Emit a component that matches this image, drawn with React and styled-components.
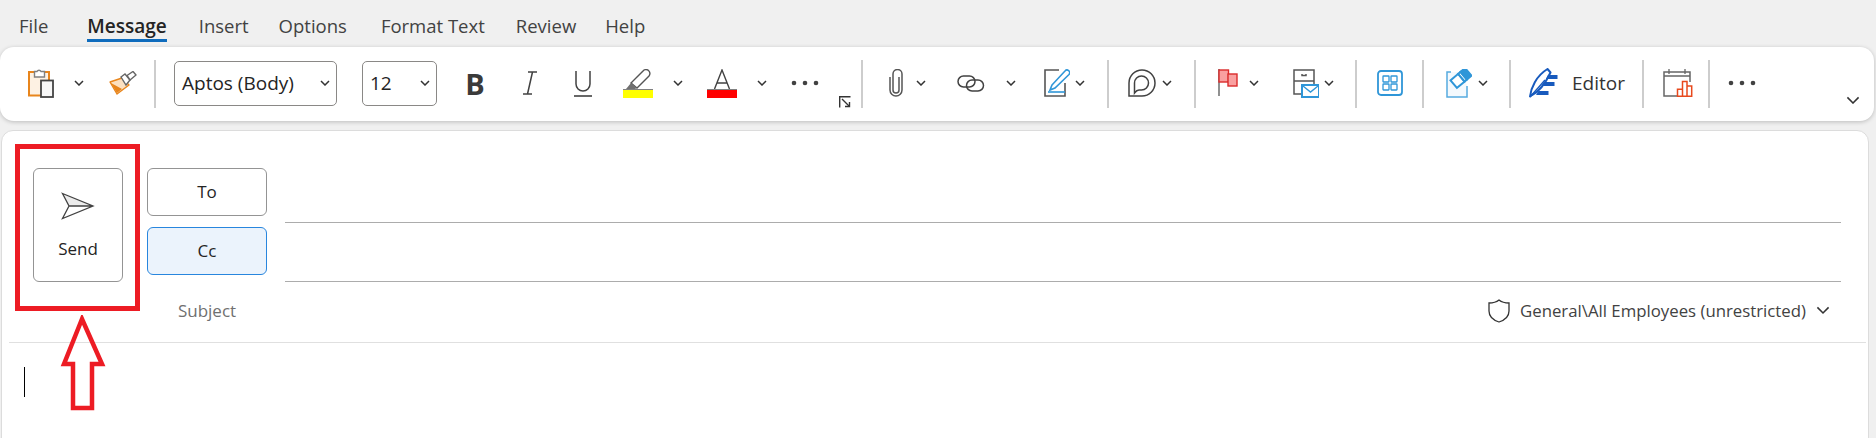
import React from 'react';
import styled, { createGlobalStyle } from 'styled-components';

const GlobalStyle = createGlobalStyle`
  html, body {
    margin: 0;
    padding: 0;
    background: #f0f0f0;
    font-family: "Open Sans", "Noto Sans", "Liberation Sans", sans-serif;
    color: #242424;
    overflow: hidden;
  }
`;

// page shell
const Page = styled.div`
  position: relative;
  width: 1876px;
  height: 438px;
  overflow: hidden;
  background: #f0f0f0;
`;

const TabBar = styled.nav`
  display: flex;
  height: 47px;
  padding-left: 19px;
  box-sizing: border-box;
`;

const Tab = styled.div`
  height: 42px;
  margin-left: ${(p) => p.$ml}px;
  padding-top: 14px;
  box-sizing: border-box;
  font-size: ${(p) => (p.$active ? 19 : 18.5)}px;
  line-height: 24px;
  font-weight: ${(p) => (p.$active ? 600 : 400)};
  color: ${(p) => (p.$active ? '#242424' : '#424242')};
  border-bottom: 3px solid ${(p) => (p.$active ? '#0f6cbd' : 'transparent')};
`;

const Ribbon = styled.div`
  display: flex;
  align-items: center;
  width: 1874px;
  height: 74px;
  padding: 0 0 2px 28px;
  box-sizing: border-box;
  background: #fff;
  border-radius: 14px;
  box-shadow: 0 1px 4px rgba(0, 0, 0, 0.22);
`;

const Slot = styled.div`
  flex: none;
  display: flex;
  align-items: center;
  justify-content: center;
  width: ${(p) => p.$w}px;
  margin-left: ${(p) => p.$ml || 0}px;
`;

const Sep = styled.div`
  flex: none;
  width: 2px;
  height: 48px;
  margin-top: 2px;
  margin-left: ${(p) => p.$ml}px;
  background: #cdcdcd;
`;

const Select = styled.div`
  flex: none;
  display: flex;
  align-items: center;
  justify-content: space-between;
  width: ${(p) => p.$w}px;
  height: 45px;
  margin-left: ${(p) => p.$ml}px;
  padding: 0 6px 0 7px;
  box-sizing: border-box;
  border: 1px solid #8a8886;
  border-radius: 5px;
  font-size: 19px;
  color: #242424;
`;

const EditorLabel = styled.span`
  flex: none;
  width: 53px;
  margin-left: 13px;
  font-size: 19px;
  color: #333;
`;

const Launcher = styled(Slot)`
  align-self: flex-end;
  margin-bottom: 11px;
`;

const Collapse = styled(Slot)`
  align-self: flex-end;
  margin-left: auto;
  margin-right: 14px;
  margin-bottom: 15px;
`;

const BoldGlyph = styled.span`
  font-weight: 700;
  font-size: 29px;
  line-height: 1;
  color: #3a3a3a;
`;

// compose card
const Card = styled.section`
  width: 1868px;
  height: 320px;
  margin: 9px 0 0 1px;
  box-sizing: border-box;
  background: #fff;
  border: 1px solid #dcdcdc;
  border-radius: 12px 12px 0 0;
`;

const Header = styled.div`
  display: grid;
  grid-template-columns: 96px 120px 1556px;
  column-gap: 18px;
  padding: 37px 0 0 31px;
  height: 114px;
`;

const SendButton = styled.button`
  display: flex;
  flex-direction: column;
  align-items: center;
  width: 90px;
  height: 114px;
  padding: 23px 0 0;
  box-sizing: border-box;
  background: #fff;
  border: 1px solid #949494;
  border-radius: 6px;
  font: inherit;
  font-size: 17px;
  color: #242424;
`;

const SendLabel = styled.span`
  margin-top: 18px;
  line-height: 22px;
`;

const AddressButtons = styled.div`
  display: flex;
  flex-direction: column;
  gap: 11px;
`;

const AddressButton = styled.button`
  width: 120px;
  height: 48px;
  padding: 0 0 2px;
  box-sizing: border-box;
  background: ${(p) => (p.$selected ? '#ebf3fc' : '#fff')};
  border: 1px solid ${(p) => (p.$selected ? '#2886de' : '#949494')};
  border-radius: 6px;
  font: inherit;
  font-size: 17px;
  color: #242424;
`;

const Fields = styled.div`
  display: flex;
  flex-direction: column;
`;

const Field = styled.div`
  height: ${(p) => p.$h}px;
  box-sizing: border-box;
  border-bottom: 1px solid #acacac;
`;

const SubjectRow = styled.div`
  display: flex;
  align-items: center;
  height: 61px;
  margin: 0 2px 0 7px;
  padding: 0 0 3px 138px;
  box-sizing: border-box;
  border-bottom: 1px solid #e0e0e0;
`;

const SubjectLabel = styled.span`
  width: 120px;
  text-align: center;
  font-size: 17px;
  color: #707070;
`;

const Sensitivity = styled.div`
  display: flex;
  align-items: center;
  margin-left: auto;
  margin-right: 36px;
  font-size: 16.800px;
  color: #424242;
`;

const SensitivityText = styled.span`
  margin: 0 10px;
`;

const Body = styled.div`
  padding: 24px 0 0 22px;
`;

const Caret = styled.div`
  width: 1px;
  height: 30px;
  background: #000;
`;

// red annotations drawn on top of the screenshot
const RedBox = styled.div`
  position: absolute;
  left: 15px;
  top: 144px;
  width: 125px;
  height: 167px;
  box-sizing: border-box;
  border: 5px solid #ed1c24;
`;

const ArrowMark = styled.svg`
  position: absolute;
  left: 60px;
  top: 315px;
`;

const Chevron = ({ size = 10 }) => (
  <svg width={size} height={size * 0.6} viewBox="0 0 10 6" fill="none">
    <path d="M1 1l4 4 4-4" stroke="#333" strokeWidth={size > 10 ? 1.1 : 1.5} />
  </svg>
);

const PasteIcon = () => (
  <svg width="26" height="30" viewBox="0 0 26 30" fill="none">
    <path d="M1 4h20v24H1z" fill="#fdf1e3" />
    <path d="M7 4H1v23.500h12M15 4h6v8" stroke="#e8851c" strokeWidth="2" />
    <path d="M6.500 9V3.500h2.500a2.200 2.200 0 0 1 4 0h3.500V9z" fill="#fff" stroke="#808080" strokeWidth="1.400" />
    <rect x="13" y="12.500" width="12" height="16.500" fill="#f7f7f7" stroke="#444" strokeWidth="1.800" />
  </svg>
);

const BrushIcon = () => (
  <svg width="28" height="24" viewBox="0 0 28 24" fill="none">
    <path d="M1 11l12-4 7 7-12 9z" fill="#fce0c0" stroke="#e8851c" strokeWidth="1.400" strokeLinejoin="round" />
    <path d="M2 12l11 6-5 4z" fill="#e8851c" />
    <path d="M12 6l4-3 5 6-4 5z" fill="#fff" stroke="#666" strokeWidth="1.400" />
    <path d="M18 4.500l6-4 3 3.500-6 5z" fill="#fff" stroke="#666" strokeWidth="1.400" strokeLinejoin="round" />
  </svg>
);

const ItalicIcon = () => (
  <svg width="16" height="24" viewBox="0 0 16 24" fill="none" stroke="#424242" strokeWidth="1.500">
    <path d="M6 1h9M1 23h9M10.500 1L5.500 23" />
  </svg>
);

const UnderlineIcon = () => (
  <svg width="20" height="27" viewBox="0 0 20 27" fill="none" stroke="#424242">
    <path d="M3 1v13a7 7 0 0 0 14 0V1" strokeWidth="1.500" />
    <path d="M1 26h18" strokeWidth="1.600" />
  </svg>
);

const HighlightIcon = () => (
  <svg width="30" height="29" viewBox="0 0 30 29" fill="none">
    <path d="M8 14L20 2a2.500 2.500 0 0 1 6 5L14 19z" fill="#fff" stroke="#555" strokeWidth="1.400" />
    <path d="M3 20l5-6 6 5-2 1z" fill="#707070" />
    <path d="M0 20.500h30" stroke="#808080" />
    <rect y="21" width="30" height="8" fill="#ffff00" />
  </svg>
);

const FontColorIcon = () => (
  <svg width="30" height="29" viewBox="0 0 30 29" fill="none">
    <path d="M7.500 20L15 1l7.500 19M10 14h10" stroke="#424242" strokeWidth="1.400" />
    <path d="M0 20.500h30" stroke="#808080" />
    <rect y="21" width="30" height="8" fill="#ff0000" />
  </svg>
);

const Dots = () => (
  <svg width="28" height="6" viewBox="0 0 28 6" fill="#424242">
    <circle cx="3" cy="3" r="2.300" />
    <circle cx="14" cy="3" r="2.300" />
    <circle cx="25" cy="3" r="2.300" />
  </svg>
);

const LauncherIcon = () => (
  <svg width="12" height="12" viewBox="0 0 12 12" fill="none" stroke="#333" strokeWidth="1.400">
    <path d="M.700 11.500V.700H11.500M3 3l7.500 7.500" />
    <path d="M10.500 6v4.500H6" />
  </svg>
);

const ClipIcon = () => (
  <svg width="14" height="28" viewBox="0 0 14 28" fill="none" stroke="#555" strokeWidth="1.500">
    <path d="M10 8v13a3 3 0 0 1-6 0V5a3.500 3.500 0 0 1 9 0v16a6 6 0 0 1-12 0V8" />
  </svg>
);

const LinkIcon = () => (
  <svg width="28" height="17" viewBox="0 0 28 17" fill="none" stroke="#424242" strokeWidth="1.500">
    <rect x="1" y="1" width="17" height="11" rx="5.500" />
    <rect x="9.500" y="5" width="17" height="11" rx="5.500" />
  </svg>
);

const SignatureIcon = () => (
  <svg width="26" height="28" viewBox="0 0 26 28" fill="none">
    <path d="M15 1H1v26h20V14" stroke="#555" strokeWidth="1.600" />
    <path d="M8 16L21 2a2 2 0 0 1 4 3.500L11 19 6 21z" fill="#fff" stroke="#2f96d8" strokeWidth="1.600" />
    <path d="M4 23h17" stroke="#2f96d8" strokeWidth="1.600" />
  </svg>
);

const LoopIcon = () => (
  <svg width="28" height="28" viewBox="0 0 28 28" fill="none" stroke="#424242" strokeWidth="1.500">
    <path d="M1 27V14a13 13 0 1 1 13 13z" />
    <path d="M6.500 14a7 7 0 1 1 7 7h-2.500c-2 0-3 1-4.500 3z" />
  </svg>
);

const FlagIcon = () => (
  <svg width="20" height="28" viewBox="0 0 20 28" fill="none">
    <path d="M1 0v27" stroke="#555" strokeWidth="1.300" />
    <rect x="1" y="1" width="9.500" height="12" fill="#f9a0a0" stroke="#db2b2b" strokeWidth="1.400" />
    <rect x="10" y="5" width="9" height="12" fill="#f9a0a0" stroke="#db2b2b" strokeWidth="1.400" />
  </svg>
);

const MailFileIcon = () => (
  <svg width="26" height="29" viewBox="0 0 26 29" fill="none">
    <path d="M8 25H1V1h20v14M1 12h20M9 5v1.500h4V5" stroke="#555" strokeWidth="1.500" />
    <rect x="9" y="16" width="17" height="12" fill="#fff" stroke="#2f96d8" strokeWidth="2" />
    <path d="M10 17l7.500 6 7.500-6" stroke="#2f96d8" strokeWidth="1.400" />
  </svg>
);

const AppsIcon = () => (
  <svg width="26" height="26" viewBox="0 0 26 26" fill="none" stroke="#2f96d8">
    <rect x="1" y="1" width="24" height="24" rx="3" strokeWidth="1.800" />
    <rect x="6" y="6" width="6" height="6" rx="0.500" strokeWidth="1.300" />
    <rect x="14" y="6" width="6" height="6" rx="0.500" strokeWidth="1.300" />
    <rect x="6" y="14" width="6" height="6" rx="0.500" strokeWidth="1.300" />
    <rect x="14" y="14" width="6" height="6" rx="0.500" strokeWidth="1.300" />
  </svg>
);

const SensitivityIcon = () => (
  <svg width="26" height="29" viewBox="0 0 26 29" fill="none" stroke="#2f96d8">
    <path d="M1 3h12l8 13v12H1z" fill="#f4f9fd" stroke="none" />
    <path d="M5 3H1v25h20V17" strokeWidth="1.500" stroke="#55abe0" />
    <g transform="rotate(-40 15 9)" strokeWidth="2">
      <rect x="5.500" y="4" width="10" height="10" fill="#fff" />
      <rect x="15.500" y="4" width="3" height="10" fill="#fff" />
      <rect x="18.500" y="4" width="6" height="10" fill="#2f96d8" />
    </g>
  </svg>
);

const PenIcon = () => (
  <svg width="30" height="30" viewBox="0 0 30 30" fill="none">
    <path d="M1 28.500C2 20 7 8 18.500 1l3 3.500C18 12 11 23 3 27z" fill="#fff" stroke="#185abd" strokeWidth="2" strokeLinejoin="round" />
    <path d="M1 29L16 12" stroke="#185abd" strokeWidth="1.400" />
    <path d="M19 7h9.500v4H17zM15 14h10.500v4H12.500zM9.500 23H19.500v4H7z" fill="#185abd" />
  </svg>
);

const CalendarIcon = () => (
  <svg width="30" height="28" viewBox="0 0 30 28" fill="none">
    <path d="M14 27H1V3h26v10" stroke="#666" strokeWidth="1.500" />
    <path d="M1 7h26M6 0v5M22 0v5" stroke="#666" strokeWidth="1.300" />
    <path d="M14.500 27.200v-7h5v7zM19.500 27.200V12.500h4.500v14.700zM24 27.200V17h4.700v10.200z" fill="#fff" stroke="#e8491d" strokeWidth="1.500" />
  </svg>
);

const SendIcon = () => (
  <svg width="34" height="28" viewBox="0 0 34 28" fill="none">
    <path d="M1.500 1.500L32 14H8z" fill="#ececec" />
    <path d="M1.500 1.500L32 14 1.500 26.500 8 14zM8 14h24" stroke="#424242" strokeWidth="1.300" strokeLinejoin="miter" />
  </svg>
);

const ShieldIcon = () => (
  <svg width="22" height="24" viewBox="0 0 22 24" fill="none" stroke="#333" strokeWidth="1.300">
    <path d="M11 1c2.500 2 5.500 3 10 3v8c0 5-4 9-10 11C5 21 1 17 1 12V4c4.500 0 7.500-1 10-3z" />
  </svg>
);

export default function App() {
  return (
    <Page>
      <GlobalStyle />
      <TabBar>
        <Tab $ml={0}>File</Tab>
        <Tab $ml={39} $active>Message</Tab>
        <Tab $ml={32}>Insert</Tab>
        <Tab $ml={30}>Options</Tab>
        <Tab $ml={34}>Format Text</Tab>
        <Tab $ml={31}>Review</Tab>
        <Tab $ml={29}>Help</Tab>
      </TabBar>

      <Ribbon>
        <Slot $w={26}><PasteIcon /></Slot>
        <Slot $w={10} $ml={20}><Chevron /></Slot>
        <Slot $w={28} $ml={25}><BrushIcon /></Slot>
        <Sep $ml={17} />
        <Select $w={163} $ml={18}>Aptos (Body)<Chevron /></Select>
        <Select $w={75} $ml={25}>12<Chevron /></Select>
        <Slot $w={20} $ml={28}><BoldGlyph>B</BoldGlyph></Slot>
        <Slot $w={20} $ml={35}><ItalicIcon /></Slot>
        <Slot $w={20} $ml={33}><UnderlineIcon /></Slot>
        <Slot $w={30} $ml={30}><HighlightIcon /></Slot>
        <Slot $w={10} $ml={20}><Chevron /></Slot>
        <Slot $w={30} $ml={24}><FontColorIcon /></Slot>
        <Slot $w={10} $ml={20}><Chevron /></Slot>
        <Slot $w={28} $ml={24}><Dots /></Slot>
        <Launcher $w={12} $ml={20}><LauncherIcon /></Launcher>
        <Sep $ml={10} />
        <Slot $w={14} $ml={26}><ClipIcon /></Slot>
        <Slot $w={10} $ml={13}><Chevron /></Slot>
        <Slot $w={28} $ml={31}><LinkIcon /></Slot>
        <Slot $w={10} $ml={21}><Chevron /></Slot>
        <Slot $w={26} $ml={28}><SignatureIcon /></Slot>
        <Slot $w={10} $ml={5}><Chevron /></Slot>
        <Sep $ml={22} />
        <Slot $w={28} $ml={19}><LoopIcon /></Slot>
        <Slot $w={10} $ml={6}><Chevron /></Slot>
        <Sep $ml={22} />
        <Slot $w={20} $ml={22}><FlagIcon /></Slot>
        <Slot $w={10} $ml={11}><Chevron /></Slot>
        <Slot $w={26} $ml={34}><MailFileIcon /></Slot>
        <Slot $w={10} $ml={5}><Chevron /></Slot>
        <Sep $ml={21} />
        <Slot $w={26} $ml={20}><AppsIcon /></Slot>
        <Sep $ml={19} />
        <Slot $w={26} $ml={22}><SensitivityIcon /></Slot>
        <Slot $w={10} $ml={6}><Chevron /></Slot>
        <Sep $ml={21} />
        <Slot $w={30} $ml={18}><PenIcon /></Slot>
        <EditorLabel>Editor</EditorLabel>
        <Sep $ml={17} />
        <Slot $w={30} $ml={19}><CalendarIcon /></Slot>
        <Sep $ml={15} />
        <Slot $w={28} $ml={18}><Dots /></Slot>
        <Collapse $w={14}><Chevron size={14} /></Collapse>
      </Ribbon>

      <Card>
        <Header>
          <SendButton>
            <SendIcon />
            <SendLabel>Send</SendLabel>
          </SendButton>
          <AddressButtons>
            <AddressButton>To</AddressButton>
            <AddressButton $selected>Cc</AddressButton>
          </AddressButtons>
          <Fields>
            <Field $h={55} />
            <Field $h={59} />
          </Fields>
        </Header>
        <SubjectRow>
          <SubjectLabel>Subject</SubjectLabel>
          <Sensitivity>
            <ShieldIcon />
            <SensitivityText>General\All Employees (unrestricted)</SensitivityText>
            <Chevron size={14} />
          </Sensitivity>
        </SubjectRow>
        <Body>
          <Caret />
        </Body>
      </Card>

      <RedBox />
      <ArrowMark width="46" height="96" viewBox="0 0 46 96" fill="none">
        <path d="M22 4L4 49h9v44h19V49h10z" stroke="#ed1c24" strokeWidth="4.500" strokeLinejoin="miter" />
      </ArrowMark>
    </Page>
  );
}
